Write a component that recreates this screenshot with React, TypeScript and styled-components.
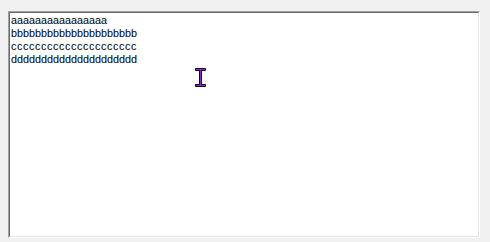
import styled, { createGlobalStyle } from 'styled-components'

const Global = createGlobalStyle`
  html, body {
    margin: 0;
    padding: 0;
    background: #f0f0f0;
  }
`

const Page = styled.div`
  width: 490px;
  height: 242px;
  padding: 11px 0 0 8px;
  box-sizing: border-box;
`

const TextBox = styled.div`
  position: relative;
  width: 472px;
  height: 227px;
  box-sizing: border-box;
  background: #ffffff;
  border-style: solid;
  border-width: 1px;
  border-color: #a0a0a0 #ffffff #ffffff #a0a0a0;
`

const Inner = styled.div`
  height: 100%;
  box-sizing: border-box;
  border-style: solid;
  border-width: 1px;
  border-color: #696969 #e3e3e3 #e3e3e3 #696969;
  padding: 1px 1px;
  font-family: 'Liberation Sans', Arial, sans-serif;
  font-size: 10.8px;
  line-height: 13px;
  color: #000;
`

const Line = styled.div<{ $spacing?: number }>`
  white-space: pre;
  letter-spacing: ${(p) => p.$spacing ?? 0}px;
`

const Cursor = styled.svg`
  position: absolute;
  left: 186px;
  top: 56px;
`

const lines = [
  { text: 'aaaaaaaaaaaaaaaa', spacing: 0 },
  { text: 'bbbbbbbbbbbbbbbbbbbbb', spacing: 0 },
  { text: 'ccccccccccccccccccccc', spacing: 0.6 },
  { text: 'ddddddddddddddddddddd', spacing: 0 },
]

export default function App() {
  return (
    <>
      <Global />
      <Page>
        <TextBox>
          <Inner>
            {lines.map((l) => (
              <Line key={l.text} $spacing={l.spacing}>
                {l.text}
              </Line>
            ))}
          </Inner>
          <Cursor width="12" height="20" viewBox="0 0 12 20">
            <path
              d="M0.5 0.5 H10.5 V2.5 H6.5 V16.5 H10.5 V18.5 H0.5 V16.5 H4.5 V2.5 H0.5 Z"
              fill="#9b1fd6"
              stroke="#000"
              strokeWidth="1"
            />
          </Cursor>
        </TextBox>
      </Page>
    </>
  )
}
